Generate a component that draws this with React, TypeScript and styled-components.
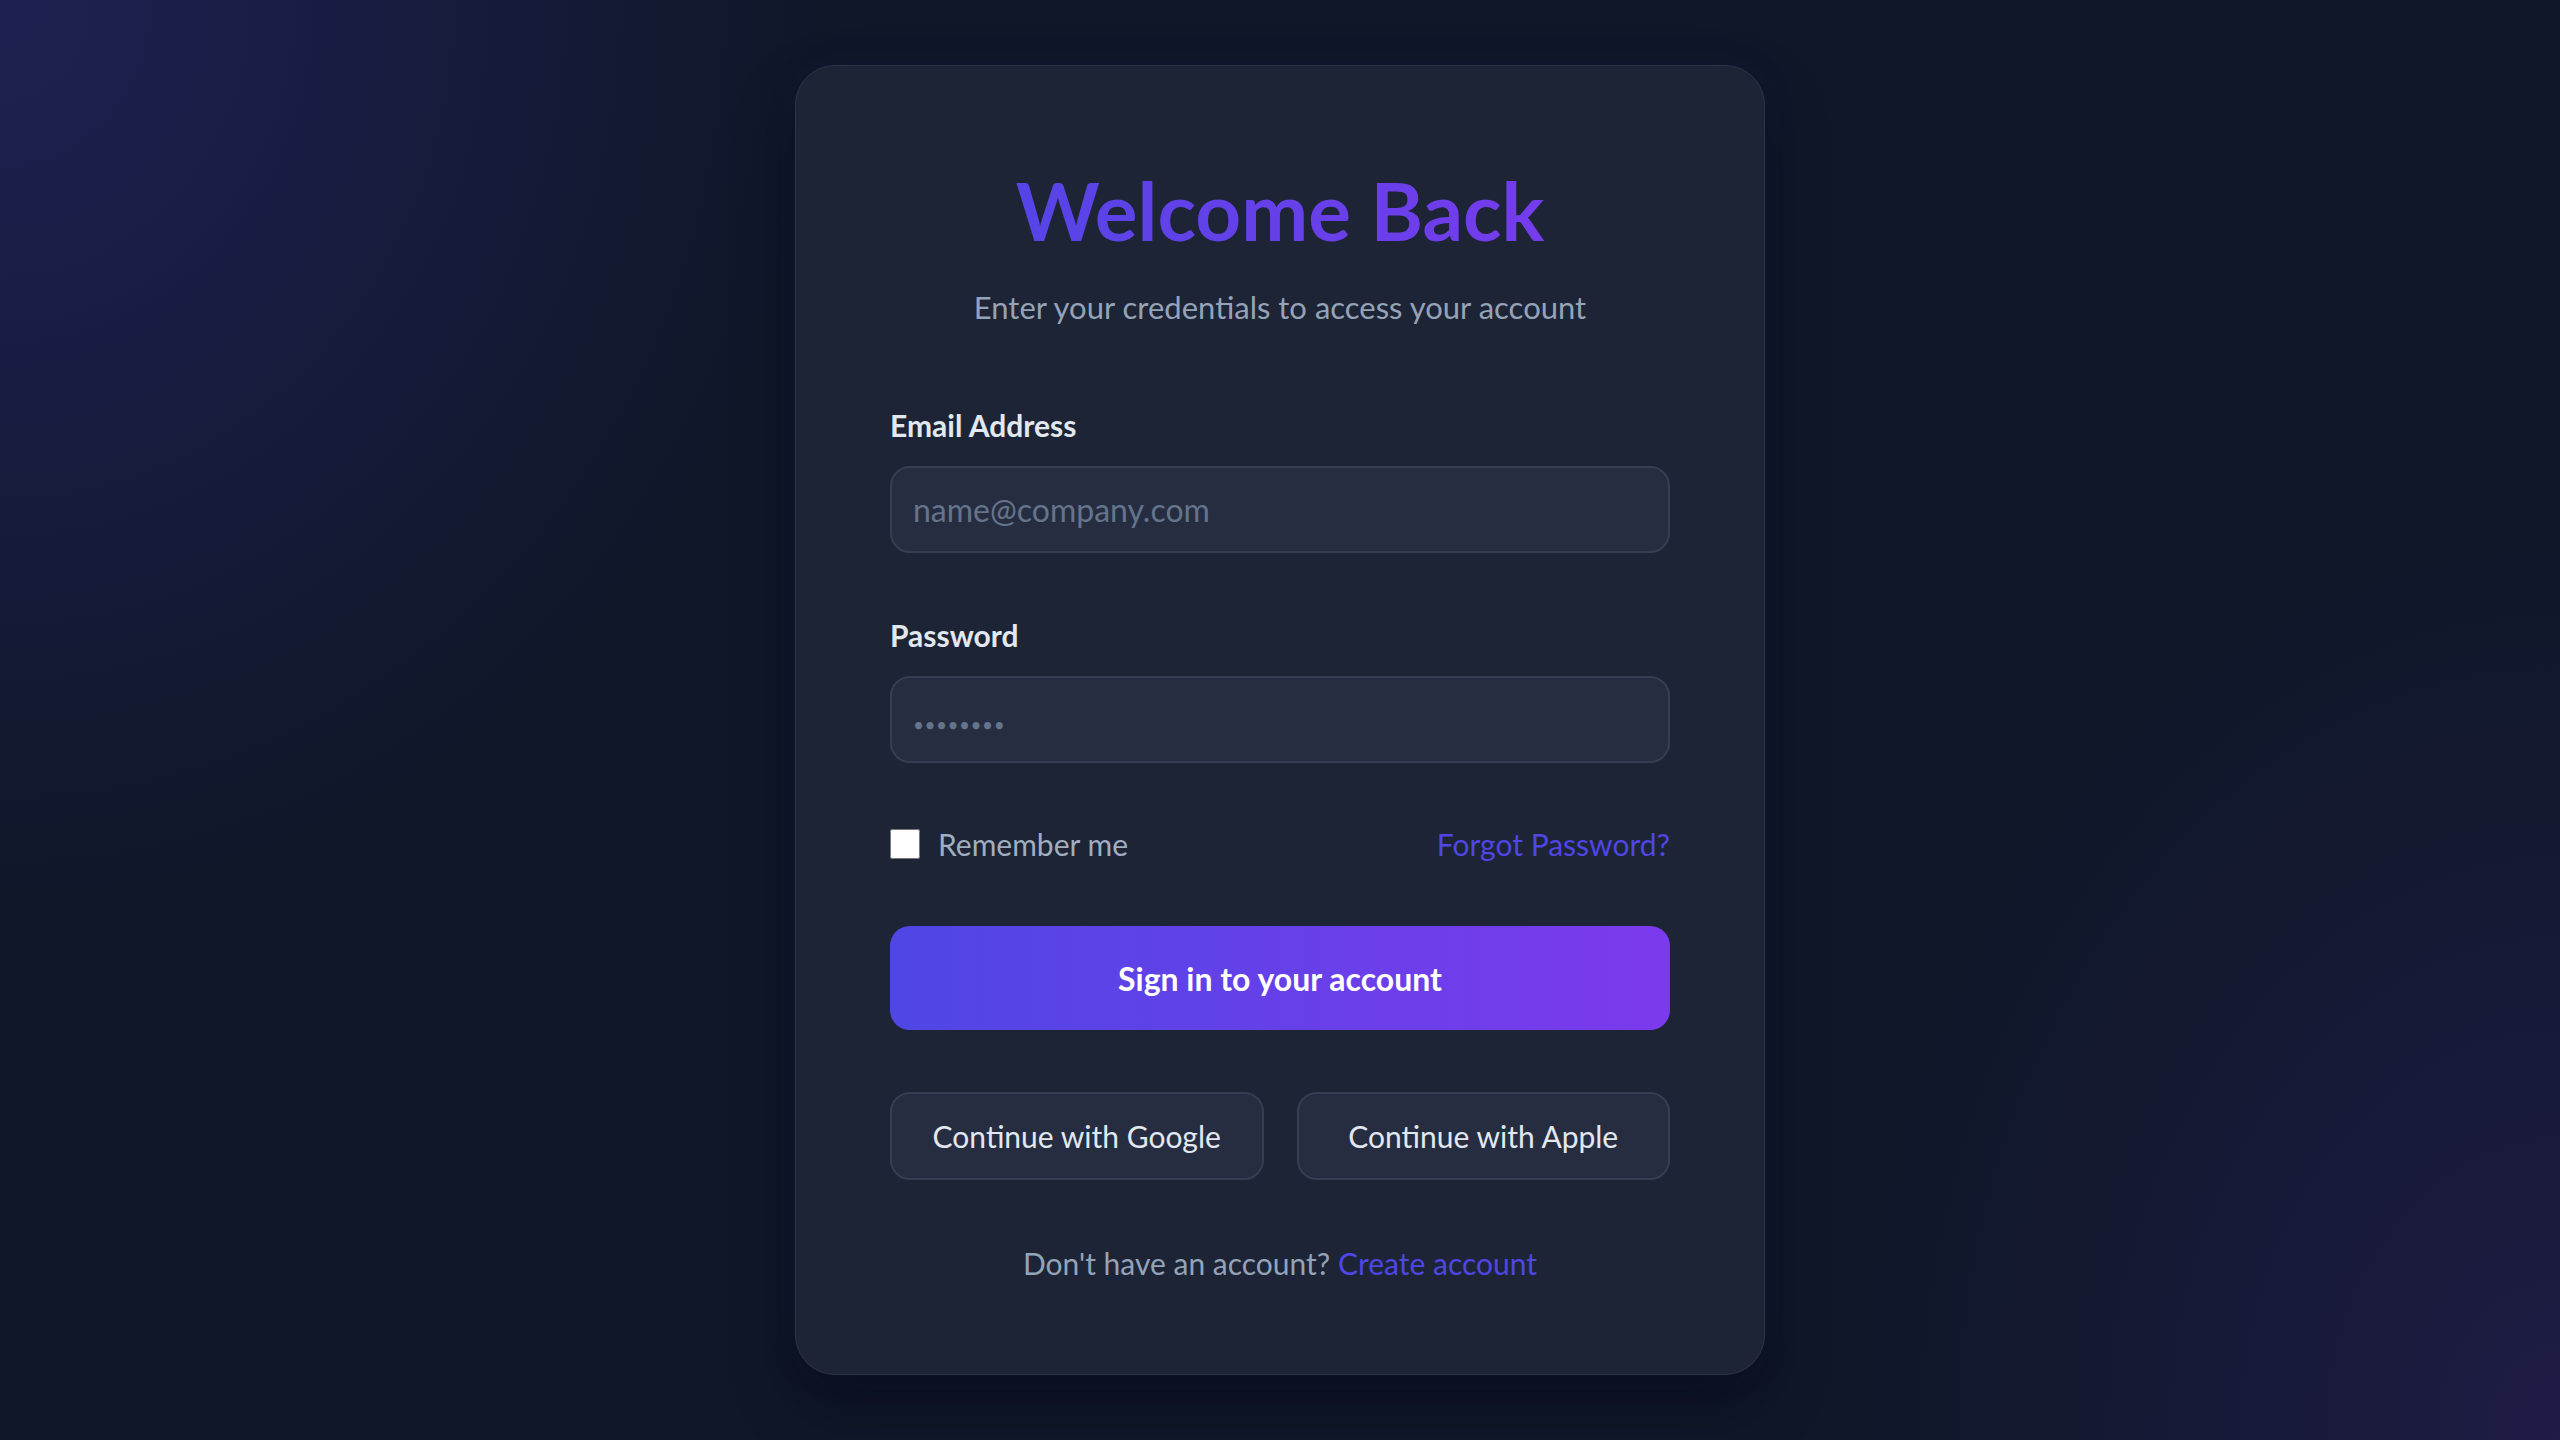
import React from "react";
import styled, { createGlobalStyle } from "styled-components";

const GlobalStyle = createGlobalStyle`
  * { box-sizing: border-box; }
  html, body { margin: 0; padding: 0; }
  body {
    font-family: Lato, "Noto Sans", sans-serif;
    background: #0f1729;
  }
`;

const Page = styled.main`
  min-height: 100vh;
  display: flex;
  align-items: center;
  justify-content: center;
  background:
    radial-gradient(ellipse 820px 900px at 0% 0%, rgba(79, 70, 229, 0.22), rgba(79, 70, 229, 0) 100%),
    radial-gradient(ellipse 700px 900px at 100% 100%, rgba(124, 58, 237, 0.14), rgba(124, 58, 237, 0) 100%),
    #0f1729;
`;

const Card = styled.section`
  width: 970px;
  padding: 96px 94px 90px;
  background: #1d2435;
  border: 1.5px solid #2c3446;
  border-radius: 40px;
  box-shadow: 0 30px 60px rgba(0, 0, 0, 0.35), 0 0 40px rgba(79, 70, 229, 0.05);
  display: flex;
  flex-direction: column;
`;

const Title = styled.h1`
  margin: 0;
  font-size: 80px;
  line-height: 96px;
  font-weight: 700;
  text-align: center;
  background: linear-gradient(90deg, #4f46e5, #7c3aed);
  -webkit-background-clip: text;
  background-clip: text;
  color: transparent;
`;

const Subtitle = styled.p`
  margin: 27px 0 0;
  font-size: 31px;
  line-height: 44px;
  color: #94a3b8;
  text-align: center;
`;

const Field = styled.div<{ $first?: boolean }>`
  display: flex;
  flex-direction: column;
  gap: 23px;
  margin-top: ${(p) => (p.$first ? "78px" : "64px")};
`;

const Label = styled.label`
  font-size: 30px;
  line-height: 36px;
  font-weight: 700;
  color: #e2e8f0;
`;

const Input = styled.input<{ $masked?: boolean }>`
  height: 87px;
  width: 100%;
  padding: 0 21px;
  font-family: inherit;
  font-size: 32px;
  color: #e2e8f0;
  background: #262d40;
  border: 2px solid #363e52;
  border-radius: 20px;
  outline: none;
  &::placeholder {
    color: #64748b;
    font-size: ${(p) => (p.$masked ? "19px" : "32px")};
    letter-spacing: ${(p) => (p.$masked ? "0.5px" : "0")};
  }
`;

const OptionsRow = styled.div`
  margin-top: 61px;
  height: 40px;
  display: flex;
  align-items: center;
  justify-content: space-between;
`;

const Remember = styled.label`
  display: flex;
  align-items: center;
  gap: 18px;
  font-size: 30px;
  color: #a0aec0;
`;

const Check = styled.input`
  width: 30px;
  height: 30px;
  margin: 0;
`;

const TextLink = styled.a`
  color: #4f46e5;
  text-decoration: none;
  font-size: 30px;
`;

const PrimaryButton = styled.button`
  margin-top: 62px;
  height: 104px;
  width: 100%;
  border: none;
  border-radius: 20px;
  background: linear-gradient(90deg, #4f46e5, #7c3aed);
  color: #ffffff;
  font-family: inherit;
  font-size: 32px;
  font-weight: 700;
  cursor: pointer;
`;

const SocialRow = styled.div`
  margin-top: 62px;
  display: grid;
  grid-template-columns: 1fr 1fr;
  gap: 33px;
`;

const SocialButton = styled.button`
  height: 88px;
  background: #262d40;
  border: 2px solid #363e52;
  border-radius: 20px;
  color: #e2e8f0;
  font-family: inherit;
  font-size: 30px;
  cursor: pointer;
`;

const Footer = styled.p`
  margin: 62px 0 0;
  font-size: 30px;
  line-height: 42px;
  color: #94a3b8;
  text-align: center;
`;

export default function App() {
  return (
    <>
      <GlobalStyle />
      <Page>
        <Card>
          <Title>Welcome Back</Title>
          <Subtitle>Enter your credentials to access your account</Subtitle>

          <Field $first>
            <Label htmlFor="email">Email Address</Label>
            <Input id="email" type="email" placeholder="name@company.com" />
          </Field>

          <Field>
            <Label htmlFor="password">Password</Label>
            <Input id="password" type="password" $masked placeholder="••••••••" />
          </Field>

          <OptionsRow>
            <Remember>
              <Check type="checkbox" />
              Remember me
            </Remember>
            <TextLink href="#">Forgot Password?</TextLink>
          </OptionsRow>

          <PrimaryButton type="button">Sign in to your account</PrimaryButton>

          <SocialRow>
            <SocialButton type="button">Continue with Google</SocialButton>
            <SocialButton type="button">Continue with Apple</SocialButton>
          </SocialRow>

          <Footer>
            Don't have an account? <TextLink href="#">Create account</TextLink>
          </Footer>
        </Card>
      </Page>
    </>
  );
}
